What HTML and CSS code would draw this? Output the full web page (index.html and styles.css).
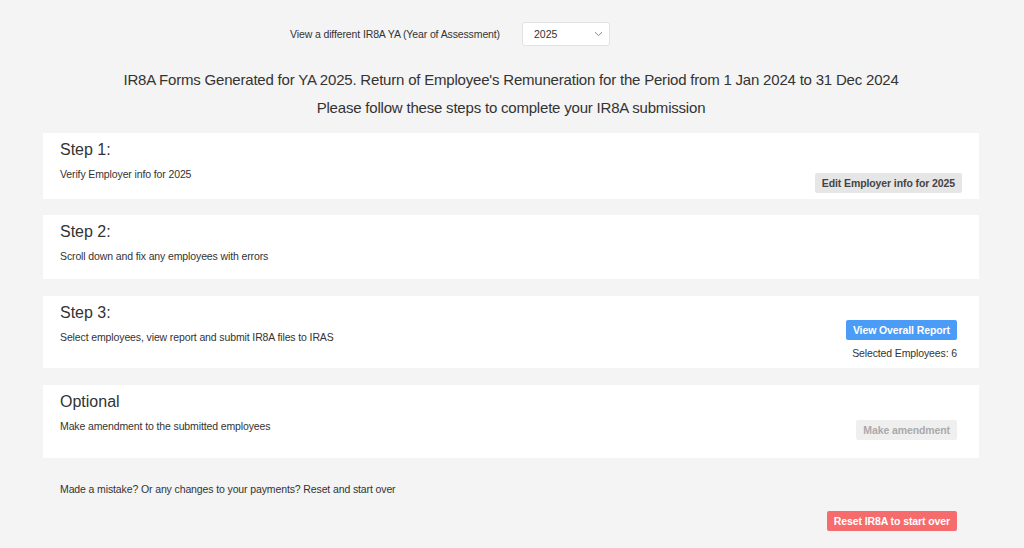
FILE: index.html
```html
<!DOCTYPE html>
<html>
<head>
<meta charset="utf-8">
<link rel="stylesheet" href="styles.css">
</head>
<body>
<div class="page">
  <div class="ya-row">
    <label class="ya-label" for="ya">View a different IR8A YA (Year of Assessment)</label>
    <div class="ya-select">
      <span>2025</span>
      <svg class="chev" width="9" height="6" viewBox="0 0 9 6"><path d="M1 1.2 L4.5 4.6 L8 1.2" fill="none" stroke="#888" stroke-width="1"/></svg>
    </div>
  </div>
  <h1 class="title">IR8A Forms Generated for YA 2025. Return of Employee's Remuneration for the Period from 1 Jan 2024 to 31 Dec 2024</h1>
  <h2 class="subtitle">Please follow these steps to complete your IR8A submission</h2>

  <section class="card card-1">
    <div class="card-main">
      <h3>Step 1:</h3>
      <p>Verify Employer info for 2025</p>
    </div>
    <div class="card-action">
      <button class="btn btn-grey">Edit Employer info for 2025</button>
    </div>
  </section>

  <section class="card card-2">
    <div class="card-main">
      <h3>Step 2:</h3>
      <p>Scroll down and fix any employees with errors</p>
    </div>
  </section>

  <section class="card card-3">
    <div class="card-main">
      <h3>Step 3:</h3>
      <p>Select employees, view report and submit IR8A files to IRAS</p>
    </div>
    <div class="card-action">
      <button class="btn btn-blue">View Overall Report</button>
      <div class="selected">Selected Employees: 6</div>
    </div>
  </section>

  <section class="card card-4">
    <div class="card-main">
      <h3>Optional</h3>
      <p>Make amendment to the submitted employees</p>
    </div>
    <div class="card-action">
      <button class="btn btn-disabled">Make amendment</button>
    </div>
  </section>

  <div class="reset">
    <p>Made a mistake? Or any changes to your payments? Reset and start over</p>
    <div class="reset-action">
      <button class="btn btn-red">Reset IR8A to start over</button>
    </div>
  </div>
</div>
</body>
</html>
```

FILE: styles.css
```css
* { box-sizing: border-box; }
html, body {
  margin: 0;
  padding: 0;
  background: #f4f4f4;
  font-family: "Liberation Sans", Arial, sans-serif;
  color: #333;
}
.page {
  width: 936px;
  margin: 0 0 0 43px;
  padding-top: 22px;
}
.ya-row {
  display: grid;
  grid-template-columns: 1fr 1fr;
  column-gap: 22px;
  align-items: center;
}
.ya-label {
  justify-self: end;
  font-size: 10.5px;
  letter-spacing: -0.12px;
  color: #333;
}
.ya-select {
  width: 88px;
  height: 24px;
  background: #fff;
  border: 1px solid #e2e2e2;
  border-radius: 3px;
  display: flex;
  align-items: center;
  justify-content: space-between;
  padding: 0 6px 0 11px;
  font-size: 10.5px;
  color: #333;
}
.chev { display: block; }
.title {
  margin: 24px 0 0;
  font-weight: normal;
  font-size: 15px;
  letter-spacing: -0.2px;
  line-height: 20px;
  text-align: center;
  color: #333;
}
.subtitle {
  margin: 8px 0 0;
  font-weight: normal;
  font-size: 15px;
  letter-spacing: -0.2px;
  line-height: 20px;
  text-align: center;
  color: #333;
}
.card {
  background: #fff;
  display: flex;
  justify-content: space-between;
  padding: 7px 22px 0 17px;
  margin-top: 17px;
}
.card-1 { margin-top: 15px; height: 66px; }
.card-2 { margin-top: 16px; height: 64px; }
.card-3 { height: 72px; }
.card-4 { height: 73px; }
.card h3 {
  margin: 0;
  font-size: 16px;
  line-height: 20px;
  font-weight: normal;
  color: #333;
}
.card p {
  margin: 7px 0 0;
  font-size: 10.5px;
  letter-spacing: -0.12px;
  line-height: 14px;
  color: #333;
}
.card-action {
  display: flex;
  flex-direction: column;
  align-items: flex-end;
}
.card-1 .card-action { padding-top: 33px; margin-right: -5px; }
.card-3 .card-action { padding-top: 17px; }
.card-4 .card-action { padding-top: 28px; }
.btn {
  font-family: "Liberation Sans", Arial, sans-serif;
  font-size: 10.5px;
  letter-spacing: -0.1px;
  font-weight: bold;
  height: 20px;
  padding: 0 7px;
  border: none;
  border-radius: 2px;
  line-height: 20px;
}
.btn-grey { background: #e6e6e6; color: #444; }
.btn-blue { background: #4a9cf7; color: #fff; }
.btn-disabled { background: #efefef; color: #aaa; }
.btn-red { background: #f66b6b; color: #fff; }
.selected {
  margin-top: 6px;
  font-size: 10.5px;
  letter-spacing: -0.12px;
  line-height: 14px;
  color: #333;
}
.reset {
  padding: 0 22px 0 17px;
}
.reset p {
  margin: 24px 0 0;
  font-size: 10.5px;
  letter-spacing: -0.12px;
  line-height: 14px;
  color: #333;
}
.reset-action {
  display: flex;
  justify-content: flex-end;
  margin-top: 15px;
}
```
